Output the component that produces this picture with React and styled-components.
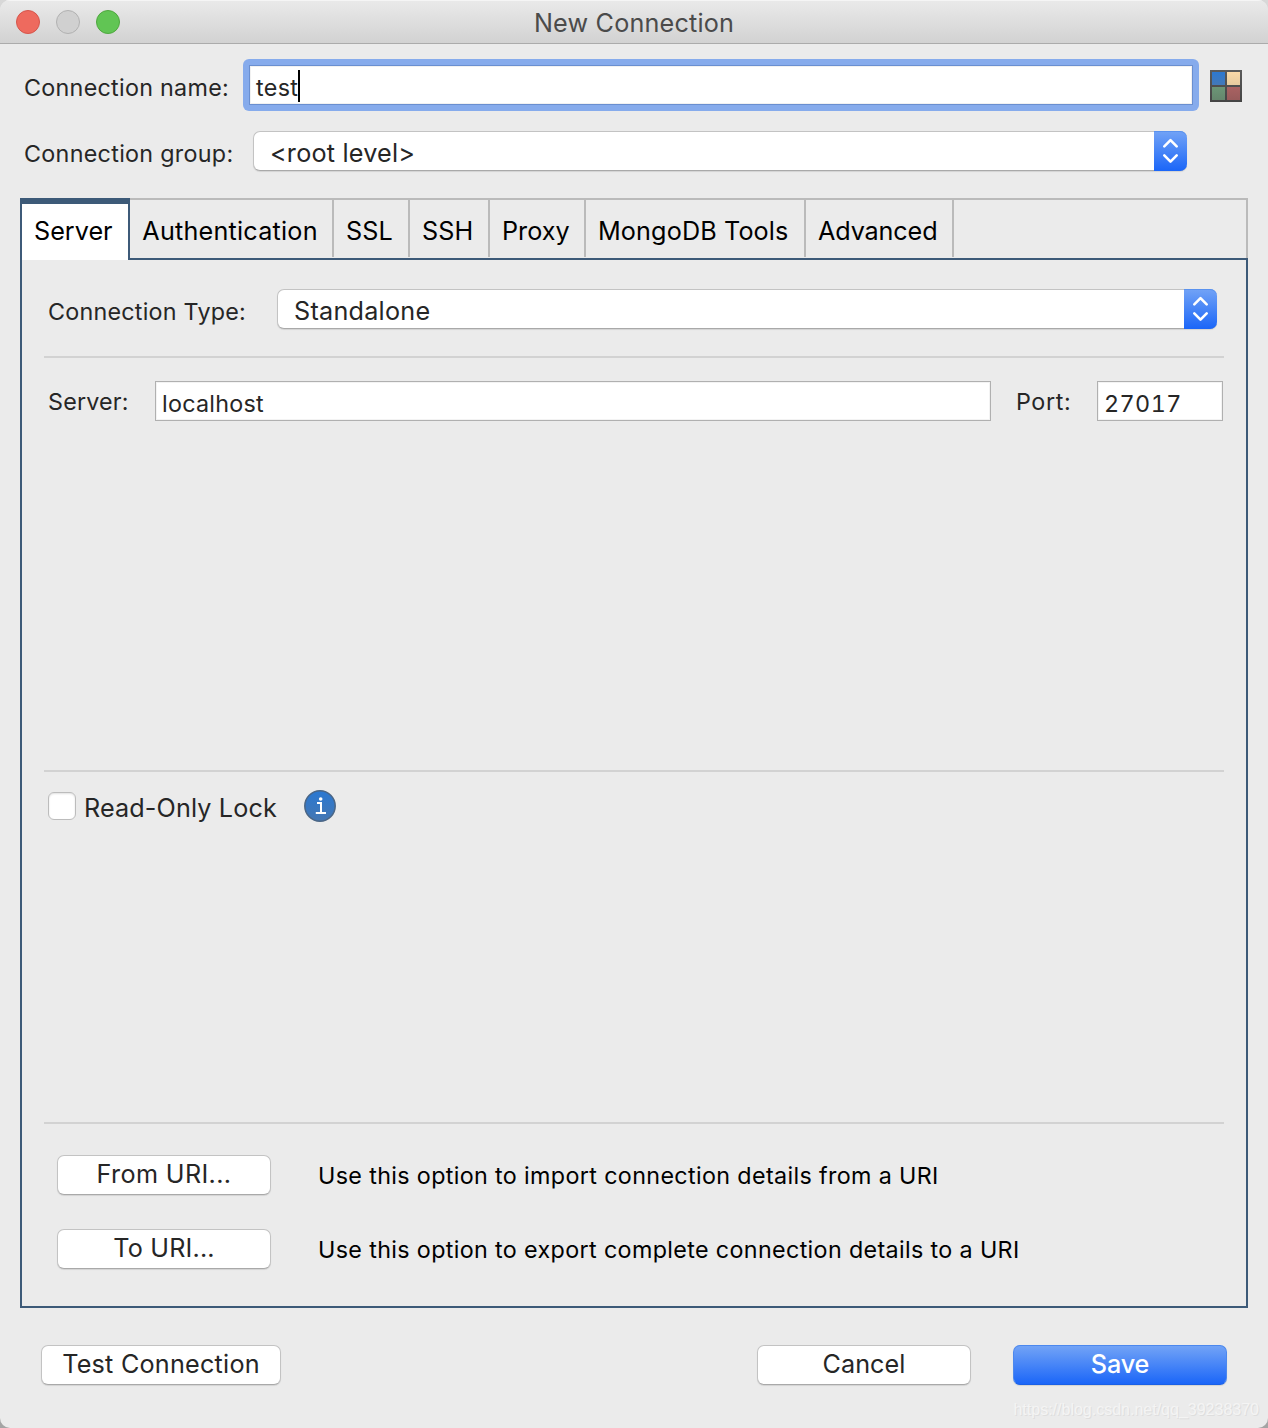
import React, { useState } from "react";
import styled, { createGlobalStyle } from "styled-components";

const tabs = [
  { name: "Server", width: 110, spacing: 0 },
  { name: "Authentication", width: 204, spacing: 0.22, indent: 12.3 },
  { name: "SSL", width: 76, spacing: 0.1 },
  { name: "SSH", width: 80, spacing: 0.15 },
  { name: "Proxy", width: 96, spacing: 0 },
  { name: "MongoDB Tools", width: 220, spacing: 0.12 },
  { name: "Advanced", width: 148, spacing: -0.13, indent: 12 },
];

function Arrows() {
  return (
    <ArrowBox>
      <svg width="17" height="26" viewBox="0 0 17 26">
        <g
          fill="none"
          stroke="#fff"
          strokeWidth="2.6"
          strokeLinecap="round"
          strokeLinejoin="round"
        >
          <path d="M2.3 8.4 L8.5 2.2 L14.7 8.4" />
          <path d="M2.3 17.4 L8.5 23.6 L14.7 17.4" />
        </g>
      </svg>
    </ArrowBox>
  );
}

function SwatchIcon() {
  return (
    <svg width="32" height="32" viewBox="0 0 32 32">
      <defs>
        <linearGradient id="frame" x1="0" y1="0" x2="0" y2="1">
          <stop offset="0" stopColor="#5a5a5a" />
          <stop offset="1" stopColor="#444" />
        </linearGradient>
        <linearGradient id="blue" x1="0" y1="0" x2="0" y2="1">
          <stop offset="0" stopColor="#2d78cf" />
          <stop offset="1" stopColor="#4479b8" />
        </linearGradient>
        <linearGradient id="sand" x1="0" y1="0" x2="0" y2="1">
          <stop offset="0" stopColor="#fad9a8" />
          <stop offset="1" stopColor="#e6cb9f" />
        </linearGradient>
        <linearGradient id="green" x1="0" y1="0" x2="0" y2="1">
          <stop offset="0" stopColor="#6b9676" />
          <stop offset="1" stopColor="#65866d" />
        </linearGradient>
        <linearGradient id="red" x1="0" y1="0" x2="0" y2="1">
          <stop offset="0" stopColor="#a96262" />
          <stop offset="1" stopColor="#985b5b" />
        </linearGradient>
      </defs>
      <rect width="32" height="32" fill="url(#frame)" />
      <rect x="2" y="2" width="13" height="13" fill="url(#blue)" />
      <rect x="17" y="2" width="13" height="13" fill="url(#sand)" />
      <rect x="2" y="17" width="13" height="13" fill="url(#green)" />
      <rect x="17" y="17" width="13" height="13" fill="url(#red)" />
    </svg>
  );
}

function InfoIcon() {
  return (
    <svg width="32" height="32" viewBox="0 0 32 32">
      <defs>
        <linearGradient id="info" x1="0" y1="0" x2="0" y2="1">
          <stop offset="0" stopColor="#2a78d2" />
          <stop offset="1" stopColor="#4577b2" />
        </linearGradient>
      </defs>
      <circle cx="16" cy="16" r="15.2" fill="url(#info)" stroke="#4b6685" strokeWidth="1.5" />
      <circle cx="16.7" cy="9" r="1.8" fill="#fff" />
      <path d="M13 13 H17 V23 M11.8 23 H22" fill="none" stroke="#fff" strokeWidth="2" />
    </svg>
  );
}

function App() {
  const [active, setActive] = useState("Server");
  return (
    <Desktop>
      <GlobalStyle />
      <Window>
        <TitleBar>
          <Lights>
            <Light fill="#ee6a5e" edge="#d5554b" />
            <Light fill="#d0d0d0" edge="#b1b1b1" />
            <Light fill="#61c554" edge="#4fa73f" />
          </Lights>
          <Title>New Connection</Title>
        </TitleBar>

        <NameRow>
          <Label width={219} spacing={0.28}>Connection name:</Label>
          <FocusRing>
            <NameField>
              test
              <Caret />
            </NameField>
          </FocusRing>
          <SwatchButton>
            <SwatchIcon />
          </SwatchButton>
        </NameRow>

        <GroupRow>
          <Label width={229} spacing={0.3}>Connection group:</Label>
          <Select width={934} spacing={0.2} indent={16}>
            <span>&lt;root level&gt;</span>
            <Arrows />
          </Select>
        </GroupRow>

        <TabBar>
          {tabs.map((tab) => (
            <Tab
              key={tab.name}
              width={tab.width}
              spacing={tab.spacing}
              indent={tab.indent}
              active={tab.name === active}
              onClick={() => setActive(tab.name)}
            >
              {tab.name}
            </Tab>
          ))}
          <TabFiller />
        </TabBar>

        <Panel>
          <TypeSection>
            <Label width={229} spacing={0.24}>Connection Type:</Label>
            <Select width={940} spacing={0.25} indent={16}>
              <span>Standalone</span>
              <Arrows />
            </Select>
          </TypeSection>

          <ServerSection>
            <Label width={107} spacing={0.18}>Server:</Label>
            <Field width={836}>localhost</Field>
            <PortLabel width={81} spacing={0.6}>Port:</PortLabel>
            <Field width={126} digits>27017</Field>
          </ServerSection>

          <LockSection>
            <Checkbox />
            <LockLabel>Read-Only Lock</LockLabel>
            <InfoIcon />
          </LockSection>

          <UriSection>
            <UriRow>
              <Button width={214} spacing={0.36}>From URI...</Button>
              <Hint>Use this option to import connection details from a URI</Hint>
            </UriRow>
            <UriRow>
              <Button width={214} spacing={0.18}>To URI...</Button>
              <Hint>Use this option to export complete connection details to a URI</Hint>
            </UriRow>
          </UriSection>
        </Panel>

        <Footer>
          <Button width={240} spacing={0.23}>Test Connection</Button>
          <FooterRight>
            <Button width={214} spacing={0.05}>Cancel</Button>
            <Button width={214} spacing={-0.15} primary>Save</Button>
          </FooterRight>
        </Footer>
      </Window>
      <Watermark>https://blog.csdn.net/qq_39238370</Watermark>
    </Desktop>
  );
}

export default App;

const GlobalStyle = createGlobalStyle`
  * {
    box-sizing: border-box;
  }

  body {
    margin: 0;
    overflow: hidden;
    font-family: Inter, "Liberation Sans", sans-serif;
    color: #262626;
  }

  svg {
    display: block;
    flex: none;
  }
`;

const Desktop = styled.div`
  position: relative;
  width: 1268px;
  height: 1428px;
  background: linear-gradient(#d8d8d8, #a4a4a4);
`;

const Window = styled.div`
  height: 1428px;
  border-radius: 10px;
  background: #ebebeb;
  overflow: hidden;
`;

const TitleBar = styled.div`
  display: grid;
  grid-template-columns: 200px 1fr 200px;
  height: 44px;
  border-bottom: 1px solid #ababab;
  box-shadow: inset 0 1px 0 #f5f5f5;
  background: linear-gradient(#eaeaea, #d2d2d2);
`;

const Lights = styled.div`
  display: flex;
  gap: 16px;
  padding: 10px 0 0 16px;
`;

const Light = styled.div.withConfig({
  shouldForwardProp: (prop) => prop !== "fill",
})`
  width: 24px;
  height: 24px;
  border-radius: 50%;
  border: 1px solid ${(props) => props.edge};
  background: ${(props) => props.fill};
`;

const Title = styled.div`
  font-size: 25.2px;
  line-height: 46px;
  letter-spacing: 0.18px;
  text-align: center;
  color: #4b4b4b;
`;

const NameRow = styled.div`
  display: flex;
  align-items: center;
  height: 52px;
  margin-top: 15px;
  padding-left: 24px;
`;

const Label = styled.div`
  flex: none;
  width: ${(props) => props.width}px;
  padding-top: 5px;
  font-size: 23.3px;
  line-height: 30px;
  letter-spacing: ${(props) => props.spacing}px;
  white-space: nowrap;
`;

const FocusRing = styled.div`
  width: 956px;
  margin-right: 11px;
  padding: 6px;
  border-radius: 6px;
  background: #86abec;
`;

const NameField = styled.div`
  display: flex;
  align-items: flex-start;
  height: 40px;
  padding: 4px 6px;
  border: 1px solid #6a8fd0;
  background: #fff;
  box-shadow: inset 0 0 0 1px #f1f1f1;
  font-size: 23.3px;
  line-height: 35px;
  letter-spacing: 0.35px;
`;

const Caret = styled.span`
  width: 2px;
  height: 32px;
  margin-left: -0.5px;
  background: #000;
`;

const SwatchButton = styled.div`
  padding-top: 2px;
`;

const GroupRow = styled.div`
  display: flex;
  align-items: center;
  height: 40px;
  margin-top: 20px;
  padding-left: 24px;
`;

const Select = styled.div`
  display: flex;
  justify-content: space-between;
  width: ${(props) => props.width}px;
  height: 40px;
  padding-left: ${(props) => props.indent}px;
  border-radius: 7px;
  border: 1px solid #c3c3c3;
  border-right: 0;
  border-bottom-color: #a9a9a9;
  background: #fff;
  box-shadow: 0 1px 1px rgba(0, 0, 0, 0.1);
  font-size: 25.2px;
  line-height: 42px;
  letter-spacing: ${(props) => props.spacing}px;
`;

const ArrowBox = styled.div`
  display: flex;
  align-items: center;
  justify-content: center;
  width: 33px;
  height: 40px;
  margin-top: -1px;
  border-radius: 0 7px 7px 0;
  background: linear-gradient(#72a3f6, #1b66f8);
  box-shadow: inset 0 1px 0 #5a92ef;
`;

const TabBar = styled.div`
  display: flex;
  height: 62px;
  margin: 27px 20px 0;
  background: linear-gradient(#3d5a78, #3d5a78) bottom / 100% 2px no-repeat;
`;

const Tab = styled.div`
  width: ${(props) => props.width}px;
  height: ${(props) => (props.active ? 62 : 59)}px;
  padding-left: ${(props) => props.indent || 12}px;
  border: 0 solid ${(props) => (props.active ? "#3d5a78" : "#bababa")};
  border-width: ${(props) => (props.active ? "6px 2px 0" : "2px 2px 0 0")};
  background: ${(props) => (props.active ? "#fff" : "#ebebeb")};
  color: #000;
  font-size: 25.2px;
  line-height: ${(props) => (props.active ? 54 : 62)}px;
  letter-spacing: ${(props) => props.spacing}px;
  white-space: nowrap;
  cursor: default;
`;

const TabFiller = styled.div`
  flex: 1;
  height: 60px;
  border: solid #bababa;
  border-width: 2px 2px 0 0;
`;

const Panel = styled.div`
  height: 1048px;
  margin: 0 20px;
  padding: 29px 22px 0;
  border: 2px solid #3d5a78;
  border-top: 0;
`;

const TypeSection = styled.div`
  display: flex;
  align-items: flex-start;
  height: 69px;
  padding-left: 4px;
  border-bottom: 2px solid #d2d2d2;

  ${Label} {
    padding-top: 7.5px;
  }
`;

const ServerSection = styled.div`
  display: flex;
  align-items: flex-start;
  height: 414px;
  padding: 23px 0 0 4px;
  border-bottom: 2px solid #d2d2d2;

  ${Label} {
    padding-top: 5.5px;
  }
`;

const PortLabel = styled(Label)`
  margin-left: 25px;
`;

const Field = styled.div`
  width: ${(props) => props.width}px;
  height: 40px;
  padding-left: 6px;
  border: 1px solid #b0b0b0;
  background: #fff;
  box-shadow: inset 0 0 0 1px #f3f3f3;
  font-size: 23.3px;
  line-height: 43px;
  letter-spacing: ${(props) => (props.digits ? 0.45 : 0.261)}px;
  font-variant-numeric: tabular-nums;
`;

const LockSection = styled.div`
  display: flex;
  align-items: flex-start;
  height: 352px;
  padding: 18px 0 0 4px;
  border-bottom: 2px solid #d2d2d2;
`;

const Checkbox = styled.div`
  width: 28px;
  height: 28px;
  margin-top: 2px;
  border: 1px solid #bcbcbc;
  border-radius: 6px;
  background: #fff;
  box-shadow: inset 0 1px 2px rgba(0, 0, 0, 0.12);
`;

const LockLabel = styled.div`
  width: 220px;
  margin-left: 8px;
  font-size: 25.2px;
  line-height: 36px;
  letter-spacing: 0.134px;
`;

const UriSection = styled.div`
  display: flex;
  flex-direction: column;
  gap: 34px;
  padding: 31px 0 0 13px;
`;

const UriRow = styled.div`
  display: flex;
  height: 40px;
`;

const Button = styled.button`
  flex: none;
  width: ${(props) => props.width}px;
  height: 40px;
  padding: 0 0 2px;
  border: 1px solid ${(props) => (props.primary ? "#4c88ee" : "#c3c3c3")};
  border-bottom-color: ${(props) => (props.primary ? "#1a60e6" : "#a9a9a9")};
  border-radius: 7px;
  background: ${(props) =>
    props.primary ? "linear-gradient(#72a3f6, #1b66f8)" : "#fff"};
  box-shadow: 0 1px 1px rgba(0, 0, 0, 0.1);
  color: ${(props) => (props.primary ? "#fff" : "#262626")};
  font-family: inherit;
  font-size: 25.2px;
  font-weight: ${(props) => (props.primary ? 500 : 400)};
  line-height: 36px;
  letter-spacing: ${(props) => props.spacing}px;
`;

const Hint = styled.div`
  margin-left: 47px;
  color: #000;
  font-size: 23.3px;
  line-height: 41px;
  letter-spacing: 0.355px;
  white-space: nowrap;
`;

const Footer = styled.div`
  display: flex;
  justify-content: space-between;
  padding: 37px 41px 0;
`;

const FooterRight = styled.div`
  display: flex;
  gap: 42px;
`;

const Watermark = styled.div`
  position: absolute;
  right: 9px;
  bottom: 8px;
  font: 16px/20px "Liberation Sans", Arial, sans-serif;
  color: #f4f4f4;
  text-shadow: 1px 1px 0 #dedede;
`;
